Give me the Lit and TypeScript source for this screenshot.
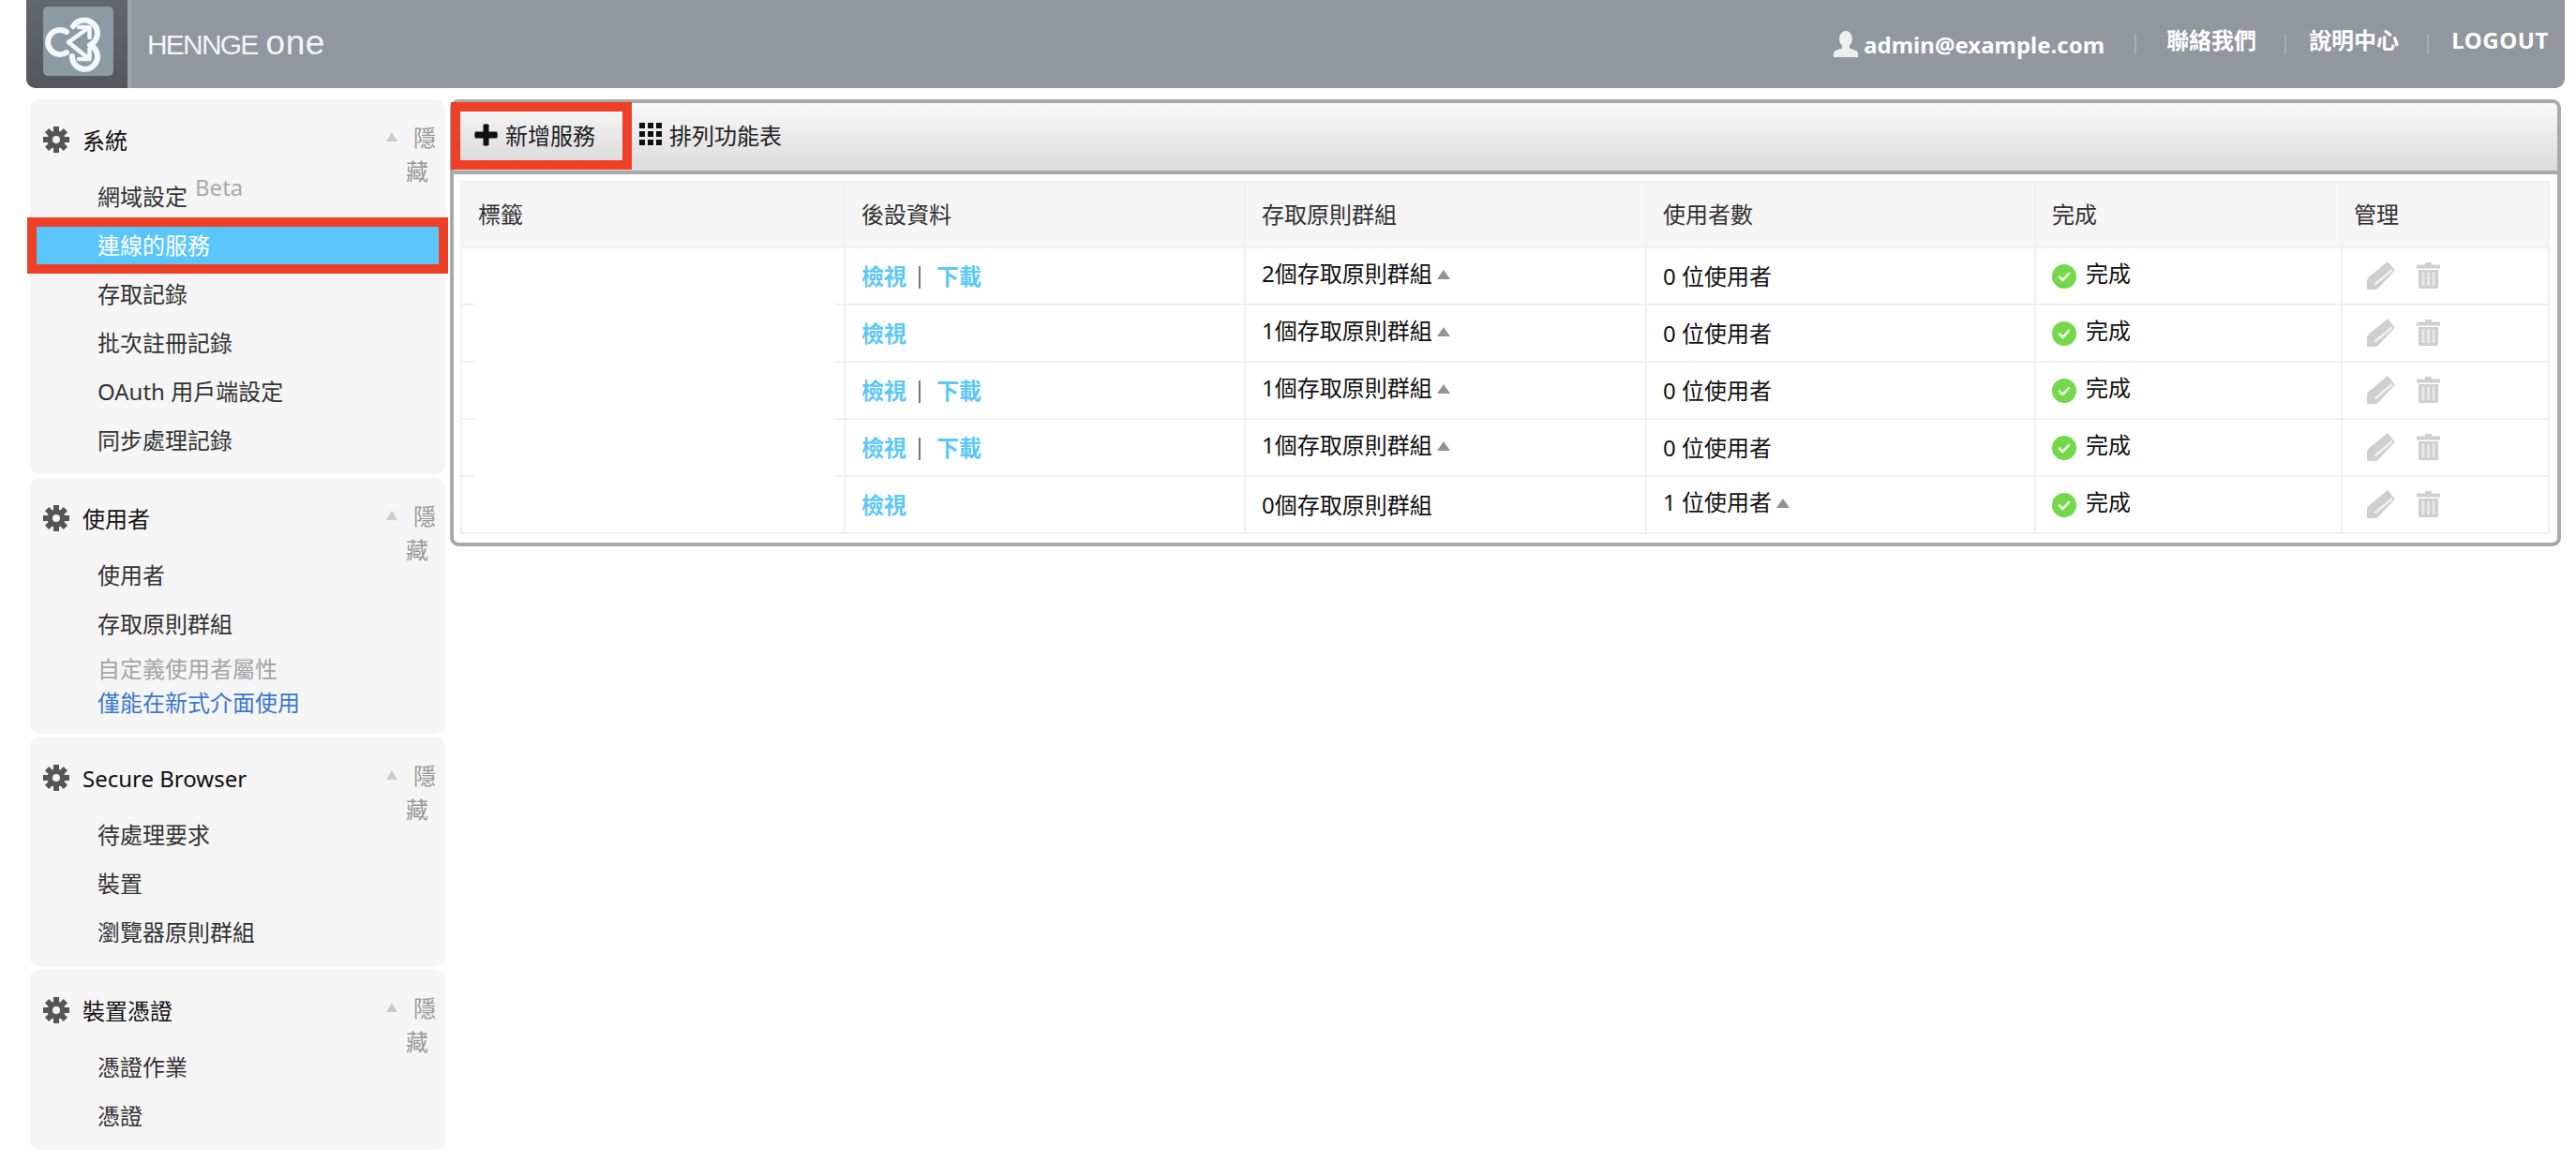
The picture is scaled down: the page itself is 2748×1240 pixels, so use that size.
import { LitElement, css, html, svg } from "lit";
import { customElement } from "lit/decorators.js";

type NavItem = { label: string; selected?: boolean; beta?: boolean; disabledNote?: string };
type NavGroup = { title: string; items: NavItem[] };
type Row = { view: boolean; download: boolean; groups: string; groupsMore: boolean; users: string; usersMore: boolean };

const groups: NavGroup[] = [
  {
    title: "系統",
    items: [
      { label: "網域設定", beta: true },
      { label: "連線的服務", selected: true },
      { label: "存取記錄" },
      { label: "批次註冊記錄" },
      { label: "OAuth 用戶端設定" },
      { label: "同步處理記錄" }
    ]
  },
  {
    title: "使用者",
    items: [
      { label: "使用者" },
      { label: "存取原則群組" },
      { label: "自定義使用者屬性", disabledNote: "僅能在新式介面使用" }
    ]
  },
  {
    title: "Secure Browser",
    items: [{ label: "待處理要求" }, { label: "裝置" }, { label: "瀏覽器原則群組" }]
  },
  {
    title: "裝置憑證",
    items: [{ label: "憑證作業" }, { label: "憑證" }]
  }
];

const rows: Row[] = [
  { view: true, download: true, groups: "2個存取原則群組", groupsMore: true, users: "0 位使用者", usersMore: false },
  { view: true, download: false, groups: "1個存取原則群組", groupsMore: true, users: "0 位使用者", usersMore: false },
  { view: true, download: true, groups: "1個存取原則群組", groupsMore: true, users: "0 位使用者", usersMore: false },
  { view: true, download: true, groups: "1個存取原則群組", groupsMore: true, users: "0 位使用者", usersMore: false },
  { view: true, download: false, groups: "0個存取原則群組", groupsMore: false, users: "1 位使用者", usersMore: true }
];

const columnWidths = [409, 427, 428, 415, 327, 221];
const columns = ["標籤", "後設資料", "存取原則群組", "使用者數", "完成", "管理"];

const gearIcon = html`<svg class="gear" viewBox="0 0 28 28">
  ${[0, 45, 90, 135, 180, 225, 270, 315].map(
    (a) => svg`<rect x="11" y="0" width="6" height="8" fill="#555" transform="rotate(${a} 14 14)"></rect>`
  )}
  <path fill="#555" fill-rule="evenodd" d="M14 4.500a9.500 9.500 0 1 0 0 19a9.500 9.500 0 1 0 0-19zM14 10a4 4 0 1 1 0 8a4 4 0 1 1 0-8z"></path>
</svg>`;

const logoIcon = html`<svg class="logo-mark" viewBox="0 0 75 74">
  <g fill="none" stroke="#f2f8fd" stroke-width="6" stroke-linecap="round" stroke-linejoin="round">
    <path d="M25 27A13 13 0 1 0 25 49"></path>
    <path d="M31 53A13.500 13.500 0 1 0 50 41A14 14 0 1 0 32 21"></path>
    <path stroke-width="4.500" d="M27 38L48 23M38 22H49.500V33"></path>
    <path stroke-width="4.500" d="M27 38L48 55M38 56H49.500V45"></path>
  </g>
</svg>`;

const userIcon = html`<svg class="user" viewBox="0 0 26 28">
  <ellipse cx="13" cy="8.500" rx="7" ry="8.500" fill="#eef0f0"></ellipse>
  <path fill="#eef0f0" d="M9 15h8v3.500c4 1.500 9 2.500 9 5.500v4H0v-4c0-3 5-4 9-5.500z"></path>
</svg>`;

const plusIcon = html`<svg class="plus" viewBox="0 0 25 24">
  <path fill="#111" d="M9.500 1q3-1.500 6 0v7.500H24q1.500 3.500 0 7h-8.500V23q-3 1.500-6 0v-7.500H1q-1.500-3.500 0-7h8.500z"></path>
</svg>`;

const gridIcon = html`<svg class="grid" viewBox="0 0 24 24">
  ${[0, 9, 18].flatMap((y) =>
    [0, 9, 18].map((x) => svg`<rect x="${x}" y="${y}" width="6" height="6" fill="#111"></rect>`)
  )}
</svg>`;

const doneIcon = html`<svg class="done-icon" viewBox="0 0 26 26">
  <circle cx="13" cy="13" r="13" fill="#74d84a"></circle>
  <path d="M8 13.500l3.500 3.500l6.500-7" fill="none" stroke="#eafbe0" stroke-width="2.600" stroke-linecap="round" stroke-linejoin="round"></path>
</svg>`;

const pencilIcon = html`<svg class="pencil" viewBox="0 0 30 30">
  <path fill="#cfcfcf" d="M22 0L30 9.500L12 28.500Q10.500 30 8 30H1.500Q0 30 0 28.500V21Q0 18.500 2 16.500z"></path>
  <path d="M8.500 24.500L27 9" stroke="#f3f3f3" stroke-width="2.400" fill="none"></path>
</svg>`;

const trashIcon = html`<svg class="trash" viewBox="0 0 25 28">
  <path fill="#cfcfcf" d="M9 0h7v2.500h9v4H0v-4h9zM2 8h21v18.500q0 1.500-1.500 1.500h-18q-1.500 0-1.500-1.500z"></path>
  <path fill="#e8e8e8" d="M5.500 10.500h3v14.500h-3zM11 10.500h3v14.500h-3zM16.500 10.500h3v14.500h-3z"></path>
</svg>`;

@customElement("app-root")
export class AppRoot extends LitElement {
  static styles = css`
    :host {
      display: block;
      width: 2748px;
      min-height: 1240px;
      background: #fff;
      font-family: "Noto Sans", "Noto Sans CJK TC", sans-serif;
      font-size: 24px;
      color: #333;
    }
    svg {
      display: block;
      flex: none;
    }

    /* top bar */
    .topbar {
      margin-left: 28px;
      width: 2708px;
      height: 94px;
      display: flex;
      align-items: stretch;
      background: #92969e;
      border-radius: 0 0 10px 10px;
      overflow: hidden;
    }
    .logo-box {
      width: 75px;
      padding: 7px 15px 0 18px;
      background: linear-gradient(#63666d, #54575c);
      border-right: 4px solid #a0a4ab;
    }
    .logo-tile {
      width: 75px;
      height: 74px;
      background: #8c9aa3;
      border-radius: 5px;
    }
    .logo-mark {
      width: 75px;
      height: 74px;
      filter: blur(0.5px);
    }
    .brand {
      margin-left: 17px;
      display: flex;
      align-items: baseline;
      padding-top: 29px;
      color: #f2f4f6;
      font-family: "Liberation Sans", sans-serif;
      line-height: 34px;
      height: 34px;
    }
    .brand-a {
      font-size: 30px;
      letter-spacing: -1.8px;
    }
    .brand-b {
      font-size: 37px;
      margin-left: 9px;
      letter-spacing: 0.5px;
    }
    .top-links {
      margin-left: auto;
      display: flex;
      align-items: center;
      color: #fff;
      font-weight: 700;
      padding-right: 17px;
    }
    .user {
      width: 26px;
      height: 28px;
      margin-right: 6px;
    }
    .email {
      margin-top: 1px;
    }
    .sep {
      width: 2px;
      height: 22px;
      margin: 0 24px 0 30px;
      background: #a8acb2;
    }
    .sep.wide {
      margin: 0 32px;
    }
    .top-link {
      margin-top: -12px;
    }
    .logout {
      margin-top: -10px;
      letter-spacing: 0.6px;
    }

    /* body */
    .body {
      display: flex;
      align-items: flex-start;
      margin: 12px 0 0 32px;
      gap: 5px;
    }
    .side {
      width: 443px;
      display: flex;
      flex-direction: column;
      gap: 4px;
    }
    .panel {
      background: #f5f5f5;
      border-radius: 10px;
      padding-bottom: 10px;
    }
    .panel-head {
      height: 78px;
      box-sizing: border-box;
      padding: 26px 10px 0 14px;
      display: flex;
      align-items: flex-start;
      color: #111;
      line-height: 36px;
    }
    .gear {
      width: 28px;
      height: 28px;
      margin: 3px 14px 0 0;
      filter: blur(0.6px);
    }
    .hide {
      margin: -3px 0 0 auto;
      width: 53px;
      color: #999;
      flex: none;
    }
    .hide-top {
      display: flex;
      justify-content: space-between;
      align-items: center;
    }
    .hide-tri {
      width: 0;
      height: 0;
      margin-bottom: 2px;
      border-left: 6px solid transparent;
      border-right: 6px solid transparent;
      border-bottom: 10px solid #ccc;
    }
    .hide-bottom {
      display: block;
      margin-left: 21px;
    }
    .item {
      height: 52px;
      line-height: 52px;
      padding-left: 72px;
      color: #333;
      white-space: nowrap;
    }
    .item.selected {
      box-sizing: border-box;
      height: 60px;
      line-height: 40px;
      margin: -4px -3px;
      padding-left: 65px;
      border: 10px solid #ee4026;
      background: #5bc6fc;
      color: #fff;
      position: relative;
    }
    .item.note {
      height: auto;
      line-height: 36px;
      padding-top: 4px;
      padding-bottom: 5px;
    }
    .off {
      display: block;
      color: #a5a5a5;
    }
    .only-new {
      display: block;
      color: #3a78d0;
    }
    .beta {
      position: relative;
      top: -10px;
      margin-left: 8px;
      color: #aaa;
    }

    /* main card */
    .main {
      width: 2252px;
      box-sizing: border-box;
      border: 4px solid #a9a9a9;
      border-radius: 9px;
      overflow: visible;
      padding-bottom: 9px;
    }
    .toolbar {
      height: 72px;
      border-bottom: 4px solid #a9a9a9;
      background: linear-gradient(#f8f8f8, #dcdcdc);
      border-radius: 5px 5px 0 0;
      display: flex;
      align-items: flex-start;
      color: #222;
    }
    .add-btn {
      box-sizing: border-box;
      height: 72px;
      width: 193px;
      margin: -1px 0 0 -3px;
      padding-left: 15px;
      border: 10px solid #ee4026;
      background: linear-gradient(#f4f4f4, #dcdcdc);
      display: flex;
      align-items: center;
      position: relative;
    }
    .add-btn span {
      margin-bottom: 4px;
    }
    .plus {
      width: 25px;
      height: 24px;
      margin: 0 8px 2px 0;
    }
    .sort-btn {
      display: flex;
      align-items: center;
      height: 66px;
      margin-left: 8px;
    }
    .grid {
      width: 24px;
      height: 24px;
      margin-right: 8px;
    }
    .table-wrap {
      padding: 7px 8px 0 7px;
    }
    table {
      border-collapse: collapse;
      table-layout: fixed;
      width: 2227px;
    }
    th,
    td {
      border: 2px solid #f0f0f0;
      padding: 0 0 0 17px;
      text-align: left;
      font-weight: 400;
      line-height: 36px;
      color: #111;
    }
    th {
      height: 68px;
      background: #f5f5f5;
      color: #333;
    }
    th:last-child {
      padding-left: 12px;
    }
    td {
      height: 59px;
    }
    .blank {
      position: relative;
    }
    /* the label column is blanked out over its row lines */
    .blank::after {
      content: "";
      position: absolute;
      left: 13px;
      right: 10px;
      bottom: -2px;
      height: 2px;
      background: #fff;
    }
    tr:last-child .blank::after {
      display: none;
    }
    .link {
      color: #5cc8fa;
      font-weight: 700;
    }
    .link-sep {
      display: inline-block;
      width: 2px;
      height: 24px;
      margin: 0 17px 0 13px;
      background: #777;
      vertical-align: -4px;
    }
    .raised {
      display: flex;
      align-items: center;
      margin-bottom: 6px;
    }
    .more {
      width: 0;
      height: 0;
      margin: 2px 0 0 5px;
      border-left: 7px solid transparent;
      border-right: 7px solid transparent;
      border-bottom: 10px solid #929292;
    }
    .done {
      display: flex;
      align-items: center;
    }
    .done-text {
      margin: 0 0 6px 10px;
    }
    .done-icon {
      width: 26px;
      height: 26px;
    }
    .manage {
      display: flex;
      align-items: center;
      padding: 0 0 2px 9px;
    }
    .pencil {
      width: 30px;
      height: 30px;
    }
    .trash {
      width: 25px;
      height: 28px;
      margin-left: 23px;
    }
  `;

  private renderItem(item: NavItem) {
    if (item.disabledNote) {
      return html`<div class="item note">
        <span class="off">${item.label}</span>
        <span class="only-new">${item.disabledNote}</span>
      </div>`;
    }
    return html`<div class="item ${item.selected ? "selected" : ""}">
      ${item.label}${item.beta ? html`<span class="beta">Beta</span>` : ""}
    </div>`;
  }

  private renderGroup(group: NavGroup) {
    return html`<section class="panel">
      <div class="panel-head">
        ${gearIcon}
        <span>${group.title}</span>
        <div class="hide">
          <div class="hide-top"><i class="hide-tri"></i><span>隱</span></div>
          <span class="hide-bottom">藏</span>
        </div>
      </div>
      ${group.items.map((item) => this.renderItem(item))}
    </section>`;
  }

  private renderCount(text: string, more: boolean) {
    if (!more) return html`${text}`;
    return html`<div class="raised"><span>${text}</span><i class="more"></i></div>`;
  }

  private renderRow(row: Row) {
    return html`<tr>
      <td class="blank"></td>
      <td>
        <span class="link">檢視</span>${row.download
          ? html`<i class="link-sep"></i><span class="link">下載</span>`
          : ""}
      </td>
      <td>${this.renderCount(row.groups, row.groupsMore)}</td>
      <td>${this.renderCount(row.users, row.usersMore)}</td>
      <td>
        <div class="done">${doneIcon}<span class="done-text">完成</span></div>
      </td>
      <td>
        <div class="manage">${pencilIcon}${trashIcon}</div>
      </td>
    </tr>`;
  }

  render() {
    return html`
      <header class="topbar">
        <div class="logo-box"><div class="logo-tile">${logoIcon}</div></div>
        <div class="brand"><span class="brand-a">HENNGE</span><span class="brand-b">one</span></div>
        <div class="top-links">
          ${userIcon}
          <span class="email">admin@example.com</span>
          <i class="sep wide"></i>
          <span class="top-link">聯絡我們</span>
          <i class="sep"></i>
          <span class="top-link">說明中心</span>
          <i class="sep"></i>
          <span class="logout">LOGOUT</span>
        </div>
      </header>
      <div class="body">
        <nav class="side">${groups.map((g) => this.renderGroup(g))}</nav>
        <main class="main">
          <div class="toolbar">
            <div class="add-btn">${plusIcon}<span>新增服務</span></div>
            <div class="sort-btn">${gridIcon}<span>排列功能表</span></div>
          </div>
          <div class="table-wrap">
            <table>
              <colgroup>${columnWidths.map((w) => html`<col style="width:${w}px" />`)}</colgroup>
              <thead>
                <tr>${columns.map((c) => html`<th>${c}</th>`)}</tr>
              </thead>
              <tbody>${rows.map((r) => this.renderRow(r))}</tbody>
            </table>
          </div>
        </main>
      </div>
    `;
  }
}
